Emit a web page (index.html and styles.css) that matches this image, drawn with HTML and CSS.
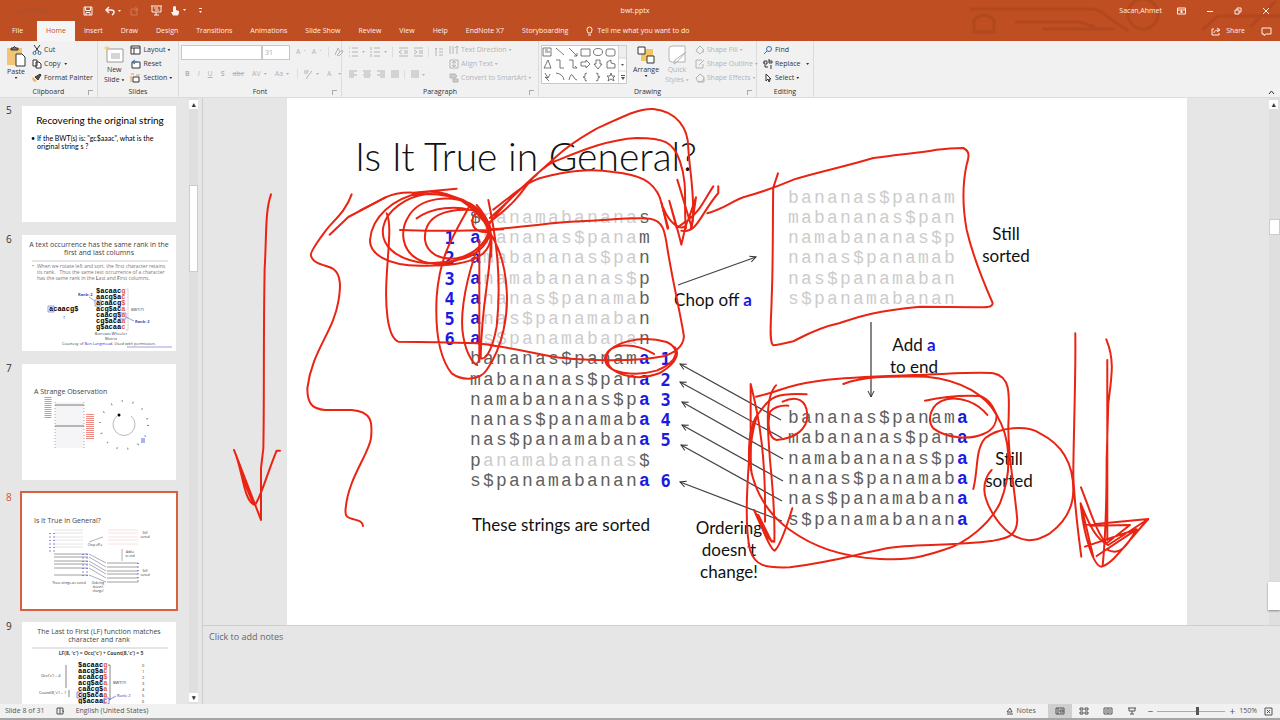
FILE: index.html
```html
<!DOCTYPE html>
<html lang="en">
<head>
<meta charset="utf-8">
<title>bwt.pptx</title>
<link rel="stylesheet" href="styles.css">
</head>
<body>
<header class="top">
  <svg class="top-art" viewBox="960 0 320 41" fill="none" stroke="#a8441c" stroke-width="3" aria-hidden="true"><path d="M970 9H1090Q1100 9 1108 17L1128 31M1015 22H1080L1095 27M1042 29H1115M1202 30L1218 16H1280M1250 27L1276 1"/><circle cx="1143" cy="14" r="15"/><path d="M974 32V20Q984 10 994 20V32Z"/></svg>
  <div class="titlebar">
    <div class="quick">
      <span class="autosave">AutoSave</span>
      <button aria-label="Save"><svg width="10" height="10" viewBox="0 0 10 10"><path d="M1 1H9V9H1ZM2.500 1V4.500H7.500V1M3 9V6.500H7V9"/></svg></button>
      <button aria-label="Undo" class="gap-s"><svg width="16" height="10" viewBox="0 0 16 10"><path stroke-width="1.500" d="M4 1L1 4L4 7M1 4H6Q9 4 9 6T7 9"/><path class="f" d="M13 4H16L14.500 6Z"/></svg></button>
      <button aria-label="Redo" class="dim"><svg width="10" height="10" viewBox="0 0 10 10"><path d="M2 3H8V9H2ZM6 1L9 3L6 5"/></svg></button>
      <button aria-label="From beginning" class="gap-s"><svg width="11" height="11" viewBox="0 0 11 11"><path d="M0 1H11M1 1V7H10V1M5 7V10M3 10H8M3 3H7M4 5H8"/></svg></button>
      <button aria-label="Touch mode"><svg width="16" height="11" viewBox="0 0 16 11"><path class="f" d="M3 2Q5 0 6 2V5L9 6V8L8 10.500H3L1 7L3 7Z"/><path class="f" d="M13 4H16L14.500 6Z"/></svg></button>
      <button aria-label="Customize"><svg width="5" height="8" viewBox="0 0 5 8"><path class="f" d="M1 1H4V2H1ZM1 4H4L2.500 6Z"/></svg></button>
    </div>
    <span class="doc">bwt.pptx</span>
    <div class="window">
      <span>Sacan,Ahmet</span>
      <button aria-label="Ribbon display"><svg width="9" height="8" viewBox="0 0 9 8"><path d="M.5 1H8.500V7H.5ZM.5 3H8.500M4.500 3V6M3 5H6"/></svg></button>
      <button aria-label="Minimize"><svg width="8" height="8" viewBox="0 0 8 8"><path d="M1 4.500H7"/></svg></button>
      <button aria-label="Restore"><svg width="8" height="8" viewBox="0 0 8 8"><path d="M1 3H5V7H1ZM3 3V1H7V5H5"/></svg></button>
      <button aria-label="Close"><svg width="8" height="8" viewBox="0 0 8 8"><path d="M1 1L7 7M7 1L1 7"/></svg></button>
    </div>
  </div>
  <nav class="tabs">
    <button class="file">File</button><button class="on">Home</button><button>Insert</button><button>Draw</button><button>Design</button><button>Transitions</button><button>Animations</button><button>Slide Show</button><button>Review</button><button>View</button><button>Help</button><button>EndNote X7</button><button>Storyboarding</button>
    <button class="tell"><svg width="7" height="10" viewBox="0 0 7 10"><path d="M2 7Q1 5 1 3.500A2.500 2.500 0 0 1 6 3.500Q6 5 5 7ZM2 9H5"/></svg>Tell me what you want to do</button>
    <span class="share"><button><svg width="10" height="9" viewBox="0 0 10 9"><path d="M3 2H1V8H8V6M3 6Q3 3 8 3M6 1L9 3L6 5"/></svg>Share</button><button aria-label="Comments"><svg width="11" height="9" viewBox="0 0 11 9"><path d="M1 1H10V7H5L3 8.500V7H1Z"/></svg></button></span>
  </nav>
</header>

<section class="ribbon" aria-label="Home ribbon">
  <div class="group g-clip">
    <div class="body">
      <button class="big"><svg width="20" height="22" viewBox="0 0 20 22"><path fill="#f3c477" stroke="none" d="M1 3H16V20H1Z"/><path d="M5 5V3H7Q8 0 10 3H12V5Z" fill="#777"/><path fill="#fff" d="M10 9H16L19 12V21H10Z"/></svg>Paste<i class="car"></i></button>
      <div class="stack">
        <button><svg width="10" height="10" viewBox="0 0 10 10"><path d="M2 0L7 7M8 0L3 7"/><circle cx="2.500" cy="8" r="1.500" stroke="#3a6ea5"/><circle cx="7.500" cy="8" r="1.500" stroke="#3a6ea5"/></svg>Cut</button>
        <button><svg width="10" height="10" viewBox="0 0 10 10"><path fill="#fff" d="M1 1H5V7H1ZM4 3H7L9 5V9H4Z"/></svg>Copy&nbsp; <i class="car"></i></button>
        <button><svg width="10" height="10" viewBox="0 0 10 10"><path fill="#f0b95d" stroke="none" d="M1 4L5 8L2 9L0 6Z"/><path fill="#555" d="M3 4L6 7L7 5L9 2L8 1L5 3Z"/></svg>Format Painter</button>
      </div>
    </div>
    <div class="label">Clipboard<i class="launch"></i></div>
  </div>
  <div class="group g-slides">
    <div class="body">
      <button class="big"><svg width="20" height="20" viewBox="0 0 20 20"><path fill="#fff" stroke="#999" d="M3 4H19V17H3Z"/><path stroke="#aaa" d="M7 9H16M7 11H16M7 13H16"/><path stroke="#ecc36a" d="M3 1V6M0 3H6"/></svg>New<span>Slide <i class="car"></i></span></button>
      <div class="stack">
        <button><svg width="11" height="10" viewBox="0 0 11 10"><path fill="#fff" d="M1 1H10V9H1ZM1 3H10M4 3V9"/></svg>Layout <i class="car"></i></button>
        <button><svg width="11" height="10" viewBox="0 0 11 10"><path fill="#fff" d="M2 3H10V9H2Z"/><path stroke="#3a6ea5" d="M5 1L2 3L5 5M2 3H7"/></svg>Reset</button>
        <button><svg width="11" height="10" viewBox="0 0 11 10"><path fill="#fff" d="M3 4H9V9H3Z"/><path stroke="#e09a4a" d="M1 1H4M6 2H10M1 3V9"/></svg>Section <i class="car"></i></button>
      </div>
    </div>
    <div class="label">Slides</div>
  </div>
  <div class="group g-font off">
    <div class="body col">
      <div class="line"><input class="face" aria-label="Font"><input class="size" aria-label="Font size" value="31"><button class="grow">A<sup>ˆ</sup></button><button>A<sup>ˇ</sup></button><button class="bar"><svg width="10" height="10" viewBox="0 0 10 10"><path d="M1 8L4 1L6 5M3 8L8 3L9 5L5 9Z"/></svg></button></div>
      <div class="line wide"><button><b>B</b></button><button><em>I</em></button><button><u>U</u></button><button><b>S</b></button><button><s>abc</s></button><button>AV <i class="car"></i></button><button>Aa <i class="car"></i></button><button class="bar"><svg width="10" height="10" viewBox="0 0 10 10"><path d="M1 2H6M1 4H5M4 8L9 2M3 9H5"/></svg> <i class="car"></i></button><button>A &nbsp;<i class="car"></i></button></div>
    </div>
    <div class="label">Font<i class="launch"></i></div>
  </div>
  <div class="group g-para off">
    <div class="body">
      <div class="col para">
        <div class="line"><button><svg width="18" height="10" viewBox="0 0 18 10"><path d="M1 1H2M1 5H2M1 9H2M4 1H10M4 5H10M4 9H10"/><path class="f" d="M14 4H17L15.500 6Z"/></svg></button><button><svg width="18" height="10" viewBox="0 0 18 10"><path d="M1 0V3M1 4V6M1 7V10M4 1H10M4 5H10M4 9H10"/><path class="f" d="M14 4H17L15.500 6Z"/></svg></button><button class="bar"><svg width="11" height="10" viewBox="0 0 11 10"><path d="M1 1H10M6 4H10M6 6H10M1 9H10M4 3L1 5L4 7"/></svg></button><button><svg width="11" height="10" viewBox="0 0 11 10"><path d="M1 1H10M6 4H10M6 6H10M1 9H10M1 3L4 5L1 7"/></svg></button><button class="bar"><svg width="16" height="10" viewBox="0 0 16 10"><path d="M2 1V9M1 2L2 1L3 2M5 2H9M5 5H9M5 8H9"/><path class="f" d="M12 4H15L13.500 6Z"/></svg></button></div>
        <div class="line"><button><svg width="10" height="9" viewBox="0 0 10 9"><path d="M1 1H9M1 3H6M1 5H9M1 7H6"/></svg></button><button><svg width="10" height="9" viewBox="0 0 10 9"><path d="M1 1H9M2 3H8M1 5H9M2 7H8"/></svg></button><button><svg width="10" height="9" viewBox="0 0 10 9"><path d="M1 1H9M4 3H9M1 5H9M4 7H9"/></svg></button><button><svg width="10" height="9" viewBox="0 0 10 9"><path d="M1 1H9M1 3H9M1 5H9M1 7H9"/></svg></button><button class="bar"><svg width="16" height="9" viewBox="0 0 16 9"><path d="M1 1H9M1 3H9M1 5H9M1 7H9"/><path class="f" d="M12 4H15L13.500 6Z"/></svg></button></div>
      </div>
      <div class="stack">
        <button><svg width="10" height="10" viewBox="0 0 10 10"><path d="M1 1V9M4 1V9M6 3L8 1L9 3M8 1V9"/></svg>Text Direction <i class="car"></i></button>
        <button><svg width="10" height="10" viewBox="0 0 10 10"><path d="M1 1H9V9H1ZM5 2V8M3 4L5 2L7 4M3 6L5 8L7 6"/></svg>Align Text <i class="car"></i></button>
        <button><svg width="10" height="10" viewBox="0 0 10 10"><path d="M1 1H6L8 3L6 5H1ZM4 6H9V9H4Z" fill="#ccc"/></svg>Convert to SmartArt <i class="car"></i></button>
      </div>
    </div>
    <div class="label">Paragraph<i class="launch"></i></div>
  </div>
  <div class="group g-draw">
    <div class="body">
      <svg class="shapes" width="86" height="39" viewBox="0 0 86 39"><path fill="#fff" stroke="#bbb" d="M.5.5H85.500V38.500H.5Z"/><path fill="#eee" stroke="#ccc" d="M77.500.5H85.500V13H77.500ZM77.500 13V38.500M77.500 26H85.500"/><path d="M2 3H10V11H2ZM4 5H7M4 7H9M15 3L23 10M28 3L36 11M36 8V11H33M40 4H49V11H40Z"/><ellipse cx="57" cy="7" rx="4.500" ry="3.500"/><rect x="65" y="4" width="9" height="7" rx="2"/><path d="M3 23L7 15L10 23ZM15 15H19V23H23M28 15H32V23H36M34 21L36 23M40 17H45V15L49 19L45 23V21H40ZM55 15H59V19H61L57 24L53 19H55ZM66 17L70 15V18L74 19V23H66Z"/><path d="M4 28L7 33L4 32L8 36M9 29L7 33M15 28Q22 29 23 35M28 35Q30 27 32 31T36 35M46 28Q43 28 44 31Q44 32 42 32Q44 32 44 33Q43 36 46 36M55 28Q58 28 57 31Q57 32 59 32Q57 32 57 33Q58 36 55 36M70 28L71 31H74L72 33L73 36L70 34L67 36L68 33L66 31H69Z"/><path class="f" d="M80 19H83L81.500 21ZM80 32H84L82 35ZM80 30H84V31H80Z"/></svg>
      <button class="big"><svg width="20" height="20" viewBox="0 0 20 20"><path fill="#f3c463" stroke="none" d="M5 4H17V16H5Z"/><path fill="#fff" d="M2 2H9V9H2ZM11 11H18V18H11Z"/></svg>Arrange<i class="car"></i></button>
      <button class="big off"><svg width="20" height="20" viewBox="0 0 20 20"><path fill="#fff" d="M2 4Q2 1 5 1H18V17H5Q2 17 2 14ZM19 7L10 17L7 19L8 15Z"/></svg>Quick<span>Styles <i class="car"></i></span></button>
      <div class="stack off">
        <button><svg width="10" height="10" viewBox="0 0 10 10"><path d="M2 4L5 1L9 5L5 9L1 6ZM8 5V8"/></svg>Shape Fill <i class="car"></i></button>
        <button><svg width="10" height="10" viewBox="0 0 10 10"><path d="M7 1H1V9H8V5M4 6L9 1"/></svg>Shape Outline <i class="car"></i></button>
        <button><svg width="10" height="10" viewBox="0 0 10 10"><path d="M5 1L9 4L8 8L3 9L1 5ZM3 9L9 9V5"/></svg>Shape Effects <i class="car"></i></button>
      </div>
    </div>
    <div class="label">Drawing<i class="launch"></i></div>
  </div>
  <div class="group g-edit">
    <div class="body">
      <div class="stack">
        <button><svg width="10" height="10" viewBox="0 0 10 10"><circle cx="6" cy="4" r="2.500" stroke="#3a6ea5"/><path stroke="#3a6ea5" d="M4 6L1 9"/></svg>Find</button>
        <button><svg width="10" height="10" viewBox="0 0 10 10"><path d="M1 4V2H4V5H1V3M6 0V4H9V2H6M2 6V8H5M7 7H9M7 9H9"/></svg>Replace &nbsp;<i class="car"></i></button>
        <button><svg width="10" height="10" viewBox="0 0 10 10"><path d="M3 1V8L5 6L6 9L7 8L6 6H8Z" fill="#fff"/></svg>Select <i class="car"></i></button>
      </div>
    </div>
    <div class="label">Editing</div>
  </div>
  <button class="collapse" aria-label="Collapse ribbon"><svg width="7" height="5" viewBox="0 0 7 5"><path d="M1 4L3.500 1L6 4"/></svg></button>
</section>

<main class="work">
  <aside class="pane">
    <ol class="thumbs" start="5">
      <li><span>5</span><svg viewBox="0 0 154 116">
        <g class="comic"><text x="78" y="18" font-size="10" text-anchor="middle">Recovering the original string</text><text x="9" y="35" font-size="7">•</text><text x="15" y="35" font-size="7">If the BWT(s) is: "gc$aaac", what is the</text><text x="15" y="43" font-size="7">original string s ?</text></g></svg></li>
      <li><span>6</span><svg viewBox="0 0 154 116">
        <g font-size="7" text-anchor="middle" fill="#444"><text x="77" y="12">A text occurrence has the same rank in the</text><text x="77" y="20">first and last columns</text></g>
        <path stroke="#ccc" d="M10 26H146"/>
        <g font-size="5" fill="#777"><text x="10" y="33">•</text><text x="15" y="33">When we rotate left and sort, the first character retains</text><text x="15" y="39">its rank. &#160; Thus the same text occurrence of a character</text><text x="15" y="45">has the same rank in the <tspan font-weight="700">L</tspan>ast and <tspan font-weight="700">F</tspan>irst columns.</text></g>
        <g class="mono" font-size="7"><text x="74" y="58">$acaac<tspan fill="#e05a4a">g</tspan></text><text x="74" y="64">aacg$a<tspan fill="#e05a4a">c</tspan></text><text x="74" y="70">acaacg<tspan fill="#e05a4a">$</tspan></text><text x="74" y="76">acg$ac<tspan fill="#e05a4a">a</tspan></text><text x="74" y="82">caacg$<tspan fill="#e05a4a">a</tspan></text><text x="74" y="88">cg$aca<tspan fill="#e05a4a">a</tspan></text><text x="74" y="94">g$acaa<tspan fill="#e05a4a">c</tspan></text><text x="27" y="76">acaacg$</text></g>
        <g font-size="4" fill="#444"><text x="41" y="84">T</text><text x="109" y="76">BWT(T)</text><text x="89" y="100" text-anchor="middle">Burrows Wheeler</text><text x="89" y="105" text-anchor="middle">Matrix</text><text x="40" y="110">Courtesy of <tspan fill="#33c">Ben Langmead</tspan>. Used with permission.</text></g>
        <g font-size="4" font-weight="700" fill="#44b"><text x="56" y="61">Rank: 2</text><text x="113" y="88">Rank: 2</text></g>
        <path fill="none" stroke="#6a78d0" stroke-width=".7" d="M26 71H32V77H26ZM73 65H79V71H73ZM98 78H104V84H98ZM67 62L73 66M104 82L112 86M105 112H150"/><path fill="none" stroke="#aaa" stroke-width=".5" d="M104 54H106V95H104"/></svg></li>
      <li><span>7</span><svg viewBox="0 0 154 116">
        <text x="12" y="30" font-size="7" fill="#444">A Strange Observation</text>
        <path fill="#f5f5f7" d="M33 38H62V84H33Z"/><path stroke="#aaa" stroke-dasharray="1 2" d="M33 38V84M62 38V84"/><path stroke="#777" d="M33 41H62M33 62H62"/>
        <path stroke="#8da6ec" stroke-width="7" stroke-dasharray="1 1" d="M26 33V55"/><path stroke="#ed8b84" stroke-width="8" stroke-dasharray="1 1" d="M68 50V76"/>
        <circle cx="102" cy="61" r="24" fill="none" stroke="#789" stroke-width="2" stroke-dasharray="1 10"/><path fill="none" stroke="#bbb" d="M95 52A11 11 0 1 0 109 52"/><circle cx="97" cy="51" r="1.500"/><path fill="#aab4ee" d="M119 74H123V79H119Z"/></svg></li>
      <li class="on"><span>8</span><svg viewBox="0 0 154 116">
        <text x="12" y="30" font-size="7" fill="#444">Is It True in General?</text>
        <g fill="none" stroke-width=".8"><path stroke="#ddd" d="M32 37H61M32 40H61M32 44H61M32 47H61M32 51H61M32 54H61"/><path stroke="#f4dadc" d="M86 37H116M86 40H116M86 44H116M86 47H116M86 51H116"/><path stroke="#888" d="M32 61H66M32 64H66M32 68H66M32 71H66M32 75H66M32 82H66M85 70H116M85 74H116M85 78H116M85 81H116M85 85H116M85 89H116"/><path stroke="#99a" d="M67 49L81 44M100 56V68M67 61L84 70M67 64L84 74M67 68L84 78M67 71L84 81M67 75L84 85M67 82L84 89"/><path stroke="#66d" stroke-width="1.500" stroke-dasharray="1 2.500" d="M28 40V60M32 40V60M61 61V84M65 61V84M116 70V90"/></g>
        <g font-size="3" fill="#333" text-anchor="middle"><text x="73" y="53">Chop off a</text><text x="123" y="41">Still</text><text x="123" y="45">sorted</text><text x="108" y="60">Add a</text><text x="108" y="64">to end</text><text x="123" y="79">Still</text><text x="123" y="83">sorted</text><text x="47" y="91">These strings are sorted</text><text x="76" y="91">Ordering</text><text x="76" y="95">doesn't</text><text x="76" y="99">change!</text></g></svg></li>
      <li><span>9</span><svg viewBox="0 0 154 116">
        <g font-size="7" text-anchor="middle" fill="#444"><text x="77" y="12">The Last to First (LF) function matches</text><text x="77" y="20">character and rank</text></g><path stroke="#ccc" d="M10 26H146"/>
        <text x="79" y="33" text-anchor="middle" font-size="5" font-weight="700" fill="#444">LF(8, 'c') = Occ('c') + Count(8,'c') = 5</text>
        <g class="mono" font-size="7"><text x="56" y="45">$acaac<tspan fill="#e05a4a">g</tspan></text><text x="56" y="51">aacg$a<tspan fill="#e05a4a">c</tspan></text><text x="56" y="57">acaacg<tspan fill="#e05a4a">$</tspan></text><text x="56" y="63">acg$ac<tspan fill="#e05a4a">a</tspan></text><text x="56" y="69">caacg$<tspan fill="#e05a4a">a</tspan></text><text x="56" y="75">cg$aca<tspan fill="#e05a4a">a</tspan></text><text x="56" y="81">g$acaa<tspan fill="#e05a4a">c</tspan></text></g>
        <g font-size="4" fill="#333"><text x="19" y="55">Occ('c') = 4</text><text x="17" y="72">Count(8,'c') = 1</text><text x="91" y="62">BWT(T)</text><text x="95" y="75" fill="#33b">Rank: 2</text><text x="120" y="45">0</text><text x="120" y="51">1</text><text x="120" y="57">2</text><text x="120" y="63">3</text><text x="120" y="69">4</text><text x="120" y="75">5</text><text x="120" y="81">6</text></g>
        <path fill="none" stroke="#555" stroke-width=".7" d="M44 43V66M47 68V75M86 43H88V78"/><path fill="none" stroke="#55c" stroke-width=".7" d="M55 70H60V76H55ZM82 76H87V82H82ZM87 78L94 74"/></svg></li>
    </ol>
    <div class="scroll"><b>▴</b><i class="grip"></i><b class="end">▾</b></div>
  </aside>
  <section class="editor">
    <div class="stage">
      <article class="slide">
        <h1>Is It True in General?</h1>
        <div class="matrix m-main" id="main"></div>
        <div class="matrix m-top" id="chopped"></div>
        <div class="matrix m-low" id="added"></div>
        <p class="note n-chop">Chop off <b>a</b></p>
        <p class="note n-still">Still<br>sorted</p>
        <p class="note n-add">Add <b>a</b><br>to end</p>
        <p class="note n-still2">Still<br>sorted</p>
        <p class="note n-these">These strings are sorted</p>
        <p class="note n-order">Ordering<br>doesn’t<br>change!</p>
        <svg class="ink" viewBox="287 98 900 527" aria-hidden="true">
          <defs><marker id="tip" viewBox="0 0 8 8" refX="7" refY="4" markerWidth="8" markerHeight="8" orient="auto" markerUnits="userSpaceOnUse"><path d="M1 1L7 4L1 7" fill="none" stroke="#333"/></marker></defs>
          <g stroke="#444" stroke-width="1.300"><path marker-end="url(#tip)" d="M678 285L756 257"/><path marker-end="url(#tip)" d="M871 322V397"/><path marker-end="url(#tip)" d="M781 420L680 364"/><path marker-end="url(#tip)" d="M782 438L680 382"/><path marker-end="url(#tip)" d="M783 459L682 402"/><path marker-end="url(#tip)" d="M783 481L682 425"/><path marker-end="url(#tip)" d="M782 501L681 445"/><path marker-end="url(#tip)" d="M782 521L680 482"/></g>
          <g class="pen" transform="translate(225 185) scale(.3333)"><path d="M138 28C120 80 125 150 119 250C115 450 118 650 115 790L108 850V1005M27 795L108 1005M27 795C55 860 55 950 90 960C110 930 125 870 155 797L165 797M45 840C60 900 70 930 88 958"/><path d="M380 28C360 85 320 110 300 140C270 180 255 205 258 212C265 240 310 240 325 252C350 270 347 310 340 350C325 440 260 500 247 610C247 660 265 672 300 675H380C440 680 443 710 438 760C430 810 370 880 362 970C358 1005 375 997 400 1007Q413 1012 414 1023M314 149L370 96L480 38"/></g>
          <g class="pen" transform="translate(360 180) scale(.3333)"><path d="M75 53Q110 36 160 38L290 26M0 92L75 53M160 45C250 35 320 45 370 110C400 150 400 190 370 220C330 255 250 258 180 257C80 257 28 220 30 180C35 110 100 55 180 38C260 25 330 60 390 150M390 165C360 240 290 245 200 250C100 240 60 190 70 140C80 90 140 50 200 42C290 42 350 70 392 150M170 115C220 80 290 78 330 90M392 150C360 230 260 265 190 245C120 220 120 150 145 110C180 50 270 45 330 70C370 95 390 130 392 150M340 90C270 85 190 100 195 180C200 220 240 240 290 235C340 225 380 190 385 155"/><path d="M120 150C220 155 300 152 390 150L430 148M80 100C95 130 85 200 80 290C75 370 80 470 115 485L230 487L350 490L400 496M330 75C280 170 240 220 230 350C225 450 235 530 275 580C310 605 360 600 380 570C430 500 445 400 440 330C435 240 410 190 385 150M345 225C310 330 300 420 310 470C320 530 345 555 352 555M358 180V545M392 170C395 280 365 350 362 535C375 540 395 520 410 440C425 300 410 180 385 60M385 155C350 160 330 140 340 110C350 85 370 110 385 150M350 75C380 110 400 140 393 230M375 110L395 190"/></g>
          <g class="pen" transform="translate(280 98) scale(.3333)"><path d="M620 390C670 310 760 240 830 175C880 130 920 110 950 92C1030 55 1080 30 1120 33C1190 40 1225 90 1225 150C1230 230 1245 290 1238 370L1232 392M630 360C720 280 780 210 820 192C900 160 980 125 1070 120C1150 120 1180 130 1200 190C1225 260 1210 320 1218 390M640 335C700 290 740 250 790 238C850 220 930 210 1000 222C1080 230 1120 250 1140 300L1165 390M625 375C740 290 730 260 770 230"/><path d="M1145 315L1163 392M1150 330C1170 380 1200 395 1215 385M1168 308C1180 350 1195 400 1204 440C1215 400 1215 380 1225 365M1168 308L1190 390L1218 370M1192 245L1235 388L1248 298L1225 365M1225 365C1260 340 1270 310 1300 265M1204 398C1250 410 1260 350 1315 285V265"/><path d="M630 394C760 385 800 375 900 370C1000 365 1060 358 1110 362C1150 368 1155 400 1162 450C1180 560 1200 640 1212 715C1210 750 1180 765 1150 775C1050 795 900 785 850 780C790 775 740 755 630 742M1122 768C1060 730 985 735 975 780C975 830 1070 835 1130 818C1200 790 1200 750 1160 732C1080 710 990 735 980 775C975 825 1060 855 1140 825C1200 790 1195 760 1185 748"/></g>
          <g class="pen" transform="translate(660 98) scale(.3333)"><path d="M142 346C200 330 220 305 260 295C330 275 360 262 400 245C480 220 540 210 640 180C720 168 780 165 830 155C870 150 890 150 910 150C930 160 928 175 920 200C905 270 910 340 920 395C935 460 965 540 998 615C998 630 975 628 950 628L780 626C640 640 600 655 540 675C470 690 430 715 400 730Q350 742 340 742C325 735 335 650 335 600C340 500 338 300 340 268L354 226"/></g>
          <g class="pen" transform="translate(680 360) scale(.3333)"><path d="M228 110C300 95 320 75 400 65C500 50 600 50 700 45C800 42 900 35 940 40C990 50 990 90 985 200C985 300 1000 350 1012 480C1010 530 980 535 940 542C800 560 700 550 620 565C500 590 460 605 330 622C250 625 225 615 210 570C195 500 200 400 207 300C205 230 215 180 240 155C270 110 290 98 380 103M490 72C560 45 650 50 740 50C850 60 920 110 950 165C990 230 1000 330 960 430C930 490 860 550 790 570C700 600 660 600 600 597C480 590 400 560 330 510C260 460 230 400 215 340C205 280 215 220 230 170"/><path d="M212 330V72C240 180 258 300 255 485M288 76C255 110 262 200 270 300C280 400 285 480 283 545M222 450C250 500 262 545 283 545M222 450L262 540Q278 572 284 572C300 560 320 500 337 445M235 465L275 545M308 125C350 105 380 120 382 165C382 205 350 235 290 240C265 235 262 190 270 155Q290 135 325 137M735 122C800 108 850 105 900 108C930 120 940 140 952 170M922 165C890 125 840 110 800 118C750 130 740 180 760 205C800 235 870 240 910 222C945 210 950 180 950 165"/><path d="M880 387C895 330 885 270 915 235C960 200 1040 195 1080 220C1140 250 1180 300 1180 390C1180 450 1150 490 1110 520C1060 550 1030 545 990 520C950 490 915 430 913 390C913 360 920 345 935 330M1186-80C1188 50 1180 250 1180 350C1185 450 1195 520 1204 590M1279-62C1305 0 1295 50 1285 130L1280 300C1280 400 1280 500 1268 618M1282 0V540"/><path d="M1202 430C1210 520 1240 620 1265 620C1300 610 1330 560 1405 477L1215 495M1203 382C1230 450 1250 520 1280 550L1350 495L1230 497M1202 430C1230 500 1250 540 1285 555L1405 477M1215 560L1370 508L1250 588M1370 508C1340 560 1320 590 1280 568M1202 430L1240 590"/></g>
        </svg>
      </article>
      <div class="scroll right"><b>▴</b><i class="grip"></i><i class="pager"></i></div>
    </div>
    <div class="notes">Click to add notes</div>
  </section>
</main>

<footer class="status">
  <span>Slide 8 of 31</span>
  <svg width="9" height="8" viewBox="0 0 9 8"><path d="M1 1H4V7H1ZM4 1H7V7H4M6 3L8 5"/></svg>
  <span>English (United States)</span>
  <div class="views">
    <button class="nb"><svg width="8" height="8" viewBox="0 0 8 8"><path d="M1 5L4 1L6 5ZM1 7H7"/></svg>Notes</button>
    <button class="on" aria-label="Normal"><svg width="10" height="8" viewBox="0 0 10 8"><path d="M1 1H9V7H1ZM3 1V7M5 3H8V5H5Z"/></svg></button>
    <button aria-label="Sorter"><svg width="10" height="8" viewBox="0 0 10 8"><path d="M1 1H4V3H1ZM6 1H9V3H6ZM1 5H4V7H1ZM6 5H9V7H6Z"/></svg></button>
    <button aria-label="Reading"><svg width="10" height="8" viewBox="0 0 10 8"><path d="M1 1H5V7H1ZM5 1H9V7H5M2 3H4M6 3H8M2 5H4M6 5H8"/></svg></button>
    <button aria-label="Slide show"><svg width="10" height="8" viewBox="0 0 10 8"><path d="M1 1H9M2 1V4H8V1M5 4V7M3 7H7"/></svg></button>
    <span class="zoom"><button aria-label="Zoom out">−</button><input type="range" aria-label="Zoom" min="0" max="100" value="60"><button aria-label="Zoom in">+</button></span>
    <span>150%</span>
    <button aria-label="Fit"><svg width="9" height="9" viewBox="0 0 9 9"><path d="M1 1H8V8H1ZM3 3L6 6M6 3L3 6"/></svg></button>
  </div>
</footer>
<script src="matrix.js"></script>
</body>
</html>
```
FILE: styles.css
```css
* { box-sizing: border-box; }
body { margin: 0; min-height: 100vh; display: flex; flex-direction: column; overflow: hidden; background: #e6e6e6; color: #333; font: 7px/12px "Open Sans", "Noto Sans", sans-serif; }
button { border: 0; padding: 0; background: none; color: inherit; font: inherit; display: inline-flex; align-items: center; gap: 3px; white-space: nowrap; }
svg { flex: none; }
button svg, .shapes, .status svg { fill: none; stroke: currentColor; stroke-width: 1; }
svg .f { fill: currentColor; stroke: none; }
.car { width: 3px; height: 2px; background: currentColor; clip-path: polygon(0 0, 100% 0, 50% 100%); display: inline-block; vertical-align: middle; }

.top { position: relative; background: #bf4e22; height: 41px; color: #fff0ea; }
.top-art { position: absolute; right: 0; top: 0; width: 320px; height: 41px; opacity: .5; }
.titlebar { position: relative; height: 21px; display: grid; grid-template-columns: 1fr auto 1fr; align-items: center; padding-right: 10px; }
.quick { display: flex; align-items: center; gap: 12px; padding-left: 16px; }
.autosave { color: #a9532f; margin-right: 9px; width: 46px; }
.gap-s { margin-right: -4px; }
.dim { opacity: .25; }
.window { display: flex; justify-content: flex-end; align-items: center; gap: 20px; }
.window span { margin-right: -5px; }
.tabs { position: relative; height: 20px; display: flex; align-items: stretch; padding-left: 3px; }
.tabs button { padding: 0 9px; }
.tabs .file { padding: 0 14px 0 9px; }
.tabs .on { background: #f5f5f5; color: #c0502b; }
.tabs .tell { gap: 4px; }
.share { margin-left: auto; display: flex; }
.share button { padding: 0 8px; gap: 5px; }

.ribbon { height: 57px; display: flex; background: #f1f1f1; border-bottom: 1px solid #dcdcdc; position: relative; }
.group { display: flex; flex-direction: column; border-right: 1px solid #dcdcdc; }
.g-clip { width: 98px; }
.g-slides { width: 81px; }
.g-font { width: 163px; }
.g-para { width: 197px; }
.g-draw { width: 218px; }
.g-edit { width: 57px; }
.body { flex: 1; display: flex; gap: 6px; padding: 2px 4px 0 6px; }
.body.col { padding-left: 2px; }
.col { display: flex; flex-direction: column; gap: 4px; }
.label { height: 10px; line-height: 10px; text-align: center; position: relative; }
.launch { position: absolute; right: 4px; top: 3px; width: 5px; height: 5px; border: 1px solid #aaa; border-width: 1px 0 0 1px; }
.big { flex-direction: column; gap: 0; line-height: 10px; align-self: flex-start; padding-top: 2px; }
.stack { display: flex; flex-direction: column; }
.stack button { height: 14px; gap: 2px; }
.off button, .off.big { color: #b4b4b4; }
.line { height: 18px; display: flex; align-items: center; gap: 6px; }
.line.wide { gap: 8px; padding-left: 4px; }
.bar { border-left: 1px solid #ddd; padding-left: 5px; }
.face, .size { height: 15px; border: 1px solid #c8c8c8; background: #fff; color: #aaa; font: inherit; padding: 0 2px; }
.face { width: 81px; }
.size { width: 28px; margin-left: -6px; }
.para .line { gap: 4px; }
.para { width: 95px; overflow: hidden; }
.shapes { margin: 2px 0 0 -4px; color: #555; stroke-width: .8; }
.collapse { margin: auto 5px 2px auto; }

.work { flex: 1; display: flex; height: 606px; min-height: 0; }
.pane { width: 203px; display: flex; border-right: 1px solid #cfcfcf; overflow: hidden; }
.thumbs { list-style: none; margin: 0; padding: 8px 0 0 6px; width: 189px; height: 606px; overflow: hidden; }
.thumbs li { display: flex; margin-bottom: 13px; }
.thumbs span { width: 16px; font-size: 10px; line-height: 8px; }
.thumbs svg { width: 154px; height: 116px; background: #fff; font-family: "Open Sans", sans-serif; }
.thumbs .on { color: #d35230; }
.thumbs .on svg { outline: 2px solid #d4623f; }
.comic { font-family: "Comic Sans MS", Lato, sans-serif; }
.mono { font-family: "Liberation Mono", monospace; font-weight: 700; }
.scroll { width: 9px; position: relative; background: #dfdfdf; }
.scroll b { position: absolute; top: 2px; left: 0; width: 9px; height: 9px; background: #fff; line-height: 9px; text-align: center; }
.scroll .end { top: auto; bottom: 2px; }
.grip { position: absolute; left: 0; right: 0; top: 87px; height: 87px; background: #fff; border: 1px solid #ccc; }
.editor { flex: 1; display: flex; flex-direction: column; }
.stage { flex: 1; display: flex; justify-content: center; position: relative; border-bottom: 1px solid #cfcfcf; padding-right: 9px; }
.right { position: absolute; right: 0; top: 0; bottom: 0; width: 11px; }
.right .grip { top: 121px; height: 16px; }
.pager { position: absolute; right: 0; bottom: 15px; width: 12px; height: 28px; background: #fff; box-shadow: 0 1px 2px #888; }
.notes { height: 78px; padding: 4px 6px; font-size: 9px; line-height: 14px; color: #666; }

.slide { position: relative; width: 900px; height: 527px; background: #fff; color: #111; font-family: Lato, sans-serif; }
.slide h1 { position: absolute; left: 68px; top: 34px; margin: 0; font-size: 39px; line-height: 48px; font-weight: 300; white-space: nowrap; }
.note { position: absolute; margin: 0; font-size: 17px; line-height: 22px; text-align: center; white-space: nowrap; transform: translateX(-50%); }
.note b { color: #1a1ae0; font-weight: 700; }
.n-chop { left: 426px; top: 191px; }
.n-still { left: 719px; top: 125px; }
.n-add { left: 627px; top: 236px; }
.n-still2 { left: 722px; top: 350px; }
.n-these { left: 274px; top: 416px; }
.n-order { left: 442px; top: 419px; }
.matrix { position: absolute; display: grid; grid-auto-rows: 1fr; font: 18px/20px "Liberation Mono", monospace; color: #606060; }
.m-main { left: 156px; top: 110px; height: 283px; }
.m-top { left: 500px; top: 90px; height: 121px; }
.m-low { left: 500px; top: 310px; height: 122px; }
.row { display: flex; }
.row .rank { width: 13px; text-align: center; color: #1a1ae0; font: 700 17px/20px "DejaVu Sans Mono", monospace; }
.m-main .letters { width: 182px; margin: 0 8px 0 13px; }
.letters span { display: inline-block; width: 13px; text-align: center; }
.letters .faint { color: #ccc; }
.letters .hot { color: #1a1ae0; font-weight: 700; }
.ink { position: absolute; inset: 0; width: 100%; height: 100%; overflow: visible; pointer-events: none; }
.pen { fill: none; stroke: #ea2413; stroke-width: 6; stroke-linecap: round; stroke-linejoin: round; }

.status { height: 16px; display: flex; align-items: center; gap: 11px; padding-left: 5px; background: #f1f1f1; border-bottom: 2px solid #a6a6a6; color: #555; }
.views { margin-left: auto; display: flex; align-items: center; align-self: stretch; padding-right: 0; }
.views button { padding: 0 7px; align-self: stretch; }
.views .nb { padding-right: 12px; }
.views .on { background: #cfcfcf; }
.zoom { display: flex; align-items: center; }
.zoom button { padding: 0 4px; font-size: 10px; }
.zoom input { appearance: none; width: 68px; height: 8px; margin: 0; background: linear-gradient(#aaa, #aaa) center / 100% 1px no-repeat; }
.zoom input::-webkit-slider-thumb { appearance: none; width: 3px; height: 8px; background: #555; }
```
FILE: matrix.js
```js
// Each row: [left rank, letters, right rank]. "~x" marks faint letters, "*x" highlighted, "=x" plain.
const mainRows = [
  ["", "=$ ~panamabanana =s", ""],
  ["1", "*a ~bananas$pana =m", ""],
  ["2", "*a ~mabananas$pa =n", ""],
  ["3", "*a ~namabananas$ =p", ""],
  ["4", "*a ~nanas$panama =b", ""],
  ["5", "*a ~nas$panamaba =n", ""],
  ["6", "*a ~s$panamabana =n", ""],
  ["", "=bananas$panam *a", "1"],
  ["", "=mabananas$pan *a", "2"],
  ["", "=namabananas$p *a", "3"],
  ["", "=nanas$panamab *a", "4"],
  ["", "=nas$panamaban *a", "5"],
  ["", "=p ~anamabananas =$", ""],
  ["", "=s$panamabanan *a", "6"]
];
const tails = ["bananas$panam", "mabananas$pan", "namabananas$p", "nanas$panamab", "nas$panamaban", "s$panamabanan"];
const tones = { "~": "faint", "*": "hot", "=": "plain" };

function add(parent, tag, cls, text) {
  const el = document.createElement(tag);
  el.className = cls;
  el.textContent = text;
  parent.appendChild(el);
  return el;
}

function fill(id, rows, ranked) {
  const box = document.getElementById(id);
  for (const [left, spec, right] of rows) {
    const row = add(box, "div", "row", "");
    if (ranked) add(row, "span", "rank", left);
    const letters = add(row, "span", "letters", "");
    for (const part of spec.split(" ")) {
      for (const ch of part.slice(1)) add(letters, "span", tones[part[0]], ch);
    }
    if (ranked) add(row, "span", "rank", right);
  }
}

fill("main", mainRows, true);
fill("chopped", tails.map(t => ["", "~" + t, ""]), false);
fill("added", tails.map(t => ["", "=" + t + " *a", ""]), false);
```
